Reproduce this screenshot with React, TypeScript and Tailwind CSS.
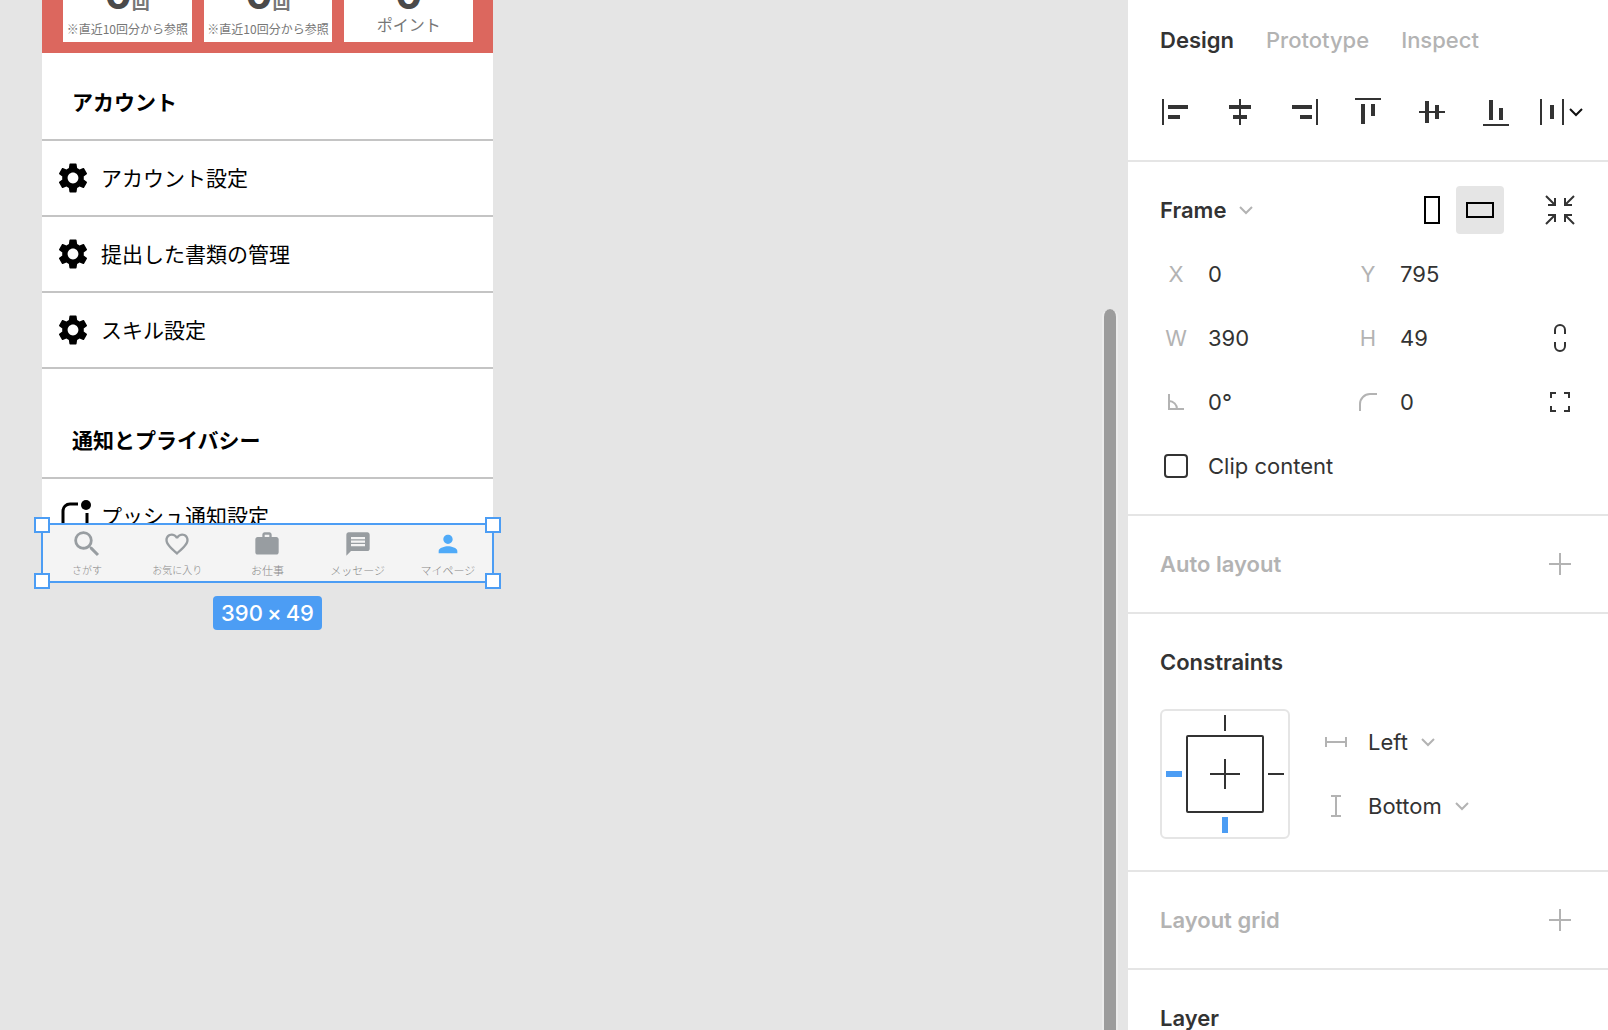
import { ReactNode } from "react";
import { MdFavoriteBorder, MdMessage, MdPerson, MdSearch, MdSettings, MdWork } from "react-icons/md";

// --- Small shared pieces ---
function Chevron() {
  return (
    <svg className="h-4 w-4 shrink-0" viewBox="0 0 16 16" fill="none" stroke="#b3b3b3" strokeWidth="2">
      <path d="M2 5l6 6 6-6" />
    </svg>
  );
}

function Plus() {
  return (
    <svg className="h-16 w-16" viewBox="0 0 64 64" fill="none" stroke="#b3b3b3" strokeWidth="2">
      <path d="M21 32h22M32 21v22" />
    </svg>
  );
}

function Dropdown({ label, options, bold = false }: { label: string; options: string[]; bold?: boolean }) {
  return (
    <label className="flex items-center gap-3">
      <select
        aria-label={label}
        className={`field-sizing-content appearance-none bg-transparent outline-none ${bold ? "font-semibold" : ""}`}
      >
        {options.map((o) => (
          <option key={o}>{o}</option>
        ))}
      </select>
      <Chevron />
    </label>
  );
}

// --- Canvas: mobile screen with the tab bar selected ---
const stats = [
  { unit: "回", note: "※直近10回分から参照" },
  { unit: "回", note: "※直近10回分から参照" },
  { unit: "", note: "ポイント" },
];

function StatCard({ unit, note }: { unit: string; note: string }) {
  return (
    <div className="flex h-[42px] flex-1 flex-col items-center justify-end overflow-hidden bg-white">
      <p className="shrink-0 font-['Inter',sans-serif] text-[40px] leading-10 font-bold text-[#4a4a4a]">
        0
        {unit && (
          <span className="font-['Noto_Sans_CJK_JP',sans-serif] text-lg leading-none text-[#777]">{unit}</span>
        )}
      </p>
      <p
        className={`h-[27px] shrink-0 whitespace-nowrap text-[#777] ${
          unit ? "text-xs leading-[27px]" : "text-base leading-[18px]"
        }`}
      >
        {note}
      </p>
    </div>
  );
}

function MenuHeading({ className, children }: { className: string; children: ReactNode }) {
  return (
    <h2
      className={`flex items-end border-b-2 border-[#c4c4c4] pb-6 pl-[30px] text-[21px] leading-7 font-bold ${className}`}
    >
      {children}
    </h2>
  );
}

function MenuRow({ icon, children }: { icon: ReactNode; children: ReactNode }) {
  return (
    <li className="flex h-[76px] items-center gap-[10px] border-b-2 border-[#c4c4c4] pl-[13px] text-[21px]">
      {icon}
      {children}
    </li>
  );
}

function PushIcon() {
  return (
    <svg className="h-9 w-9" viewBox="0 0 36 36" fill="none" stroke="#000" strokeWidth="3">
      <path d="M23 6h-8a7 7 0 0 0-7 7v13a6 6 0 0 0 6 6h12a6 6 0 0 0 6-6V15" />
      <circle cx="31" cy="7" r="5" fill="#000" stroke="none" />
    </svg>
  );
}

const tabs = [
  { label: "さがす", icon: <MdSearch size={34} />, text: "text-[10px]" },
  { label: "お気に入り", icon: <MdFavoriteBorder size={28} />, text: "text-[10px]" },
  { label: "お仕事", icon: <MdWork size={28} />, text: "text-[11px]" },
  { label: "メッセージ", icon: <MdMessage size={28} />, text: "text-[11px]" },
  { label: "マイページ", icon: <MdPerson size={28} className="text-[#4faaf8]" />, text: "text-[11px]" },
];

function Selection() {
  const handle = "absolute h-4 w-4 border-2 border-[#4c9df4] bg-white";
  return (
    <div className="pointer-events-none absolute -inset-x-px bottom-0 h-[60px] border-2 border-[#4c9df4]">
      <span className={`${handle} -top-2 -left-[9px]`} />
      <span className={`${handle} -top-2 -right-[9px]`} />
      <span className={`${handle} -bottom-2 -left-[9px]`} />
      <span className={`${handle} -right-[9px] -bottom-2`} />
    </div>
  );
}

function PhoneFrame() {
  const gear = <MdSettings size={36} />;
  return (
    <div className="flex w-[451px] flex-col items-center font-['Noto_Sans_CJK_JP',sans-serif] text-black">
      <div className="relative w-full bg-white pb-7">
        <div className="flex gap-3 bg-[#dc675e] pr-5 pb-[11px] pl-[21px]">
          {stats.map((s, i) => (
            <StatCard key={i} {...s} />
          ))}
        </div>

        <MenuHeading className="h-[88px]">アカウント</MenuHeading>
        <ul>
          <MenuRow icon={gear}>アカウント設定</MenuRow>
          <MenuRow icon={gear}>提出した書類の管理</MenuRow>
          <MenuRow icon={gear}>スキル設定</MenuRow>
        </ul>

        <MenuHeading className="h-[110px]">通知とプライバシー</MenuHeading>
        <ul>
          <MenuRow icon={<PushIcon />}>プッシュ通知設定</MenuRow>
        </ul>

        {/* Fixed tab bar over the scrolling list */}
        <nav className="absolute inset-x-0 bottom-0 grid h-[59px] grid-cols-5 bg-[#f4f4f4] pt-[3px]">
          {tabs.map((t) => (
            <button key={t.label} className="flex flex-col items-center text-[#989da1]">
              <span className="flex h-[34px] items-center">{t.icon}</span>
              <span className={`leading-[18px] font-light text-[#888] ${t.text}`}>{t.label}</span>
            </button>
          ))}
        </nav>
        <Selection />
      </div>

      <div className="mt-[13px] flex gap-1 rounded bg-[#4c9df4] px-2 font-['Inter',sans-serif] text-[22px] leading-[34px] font-medium text-white">
        <span>390</span>
        <span>×</span>
        <span>49</span>
      </div>
    </div>
  );
}

// --- Design panel ---
const alignIcons = [
  { name: "Align left", d: "M18 19h2v26h-2zM24 25h20v4H24zM24 35h12v4H24z" },
  { name: "Align horizontal centers", d: "M31 19h2v26h-2zM21 25h22v4H21zM25 35h14v4H25z" },
  { name: "Align right", d: "M44 19h2v26h-2zM20 25h20v4H20zM28 35h12v4H28z" },
  { name: "Align top", d: "M19 18h26v2H19zM25 24h4v20h-4zM35 24h4v12h-4z" },
  { name: "Align vertical centers", d: "M19 31h26v2H19zM25 21h4v22h-4zM35 25h4v14h-4z" },
  { name: "Align bottom", d: "M19 44h26v2H19zM25 20h4v20h-4zM35 28h4v12h-4z" },
];

function Section({ children }: { children: ReactNode }) {
  return <section className="border-b-2 border-[#e5e5e5] py-4">{children}</section>;
}

function EmptySection({ title }: { title: string }) {
  return (
    <Section>
      <div className="flex h-16 items-center justify-between pr-4 pl-8 text-[#b3b3b3]">
        <h3 className="font-semibold">{title}</h3>
        <button aria-label={`Add ${title}`}>
          <Plus />
        </button>
      </div>
    </Section>
  );
}

function Field({ name, icon, value }: { name: string; icon?: ReactNode; value: string }) {
  return (
    <label className="flex h-16 w-48 items-center">
      <span className="flex w-16 shrink-0 justify-center text-[#b3b3b3]">{icon ?? name}</span>
      <input aria-label={name} defaultValue={value} className="w-32 bg-transparent outline-none" />
    </label>
  );
}

function IconButton({ name, d }: { name: string; d: string }) {
  return (
    <button aria-label={name} className="ml-auto">
      <svg className="h-16 w-16" viewBox="0 0 64 64" fill="none" stroke="#333" strokeWidth="2">
        <path d={d} />
      </svg>
    </button>
  );
}

function GrayIcon({ d }: { d: string }) {
  return (
    <svg className="h-16 w-16 shrink-0" viewBox="0 0 64 64" fill="none" stroke="#b3b3b3" strokeWidth="2">
      <path d={d} />
    </svg>
  );
}

function FrameSection() {
  return (
    <Section>
      <div className="flex h-16 items-center pr-4 pl-8">
        <Dropdown label="Frame type" options={["Frame", "Group"]} bold />
        <button aria-label="Portrait" className="ml-auto flex h-12 w-12 items-center justify-center rounded">
          <span className="h-7 w-4 border-2 border-black" />
        </button>
        <button aria-label="Landscape" className="mr-6 flex h-12 w-12 items-center justify-center rounded bg-[#e5e5e5]">
          <span className="h-4 w-7 border-2 border-black" />
        </button>
        <button aria-label="Resize to fit">
          <svg className="h-16 w-16" viewBox="0 0 64 64" fill="none" stroke="#333" strokeWidth="2">
            <path d="M18 18l9 9M27 20v7h-7M46 18l-9 9M37 20v7h7M18 46l9-9M27 44v-7h-7M46 46l-9-9M37 44v-7h7" />
          </svg>
        </button>
      </div>
      <div className="flex px-4">
        <Field name="X" value="0" />
        <Field name="Y" value="795" />
      </div>
      <div className="flex px-4">
        <Field name="W" value="390" />
        <Field name="H" value="49" />
        <IconButton
          name="Constrain proportions"
          d="M27 28v-4a5 5 0 0 1 10 0v4M27 36v4a5 5 0 0 0 10 0v-4"
        />
      </div>
      <div className="flex px-4">
        <Field name="Rotation" icon={<GrayIcon d="M25 24v15h15M25 31a8 8 0 0 1 8 8" />} value="0°" />
        <Field name="Corner radius" icon={<GrayIcon d="M24 41v-7a10 10 0 0 1 10-10h7" />} value="0" />
        <IconButton name="Independent corners" d="M23 28v-5h5M36 23h5v5M41 36v5h-5M28 41h-5v-5" />
      </div>
      <label className="flex h-16 items-center gap-5 px-9">
        <input type="checkbox" className="h-6 w-6 appearance-none rounded border-2 border-[#333]" />
        Clip content
      </label>
    </Section>
  );
}

function ConstraintsSection() {
  return (
    <Section>
      <h3 className="flex h-16 items-center pl-8 font-semibold">Constraints</h3>
      <div className="flex h-40 items-center gap-[14px] pl-8">
        <svg className="h-[130px] w-[130px] shrink-0" viewBox="0 0 130 130" fill="none" strokeWidth="2">
          <rect x="1" y="1" width="128" height="128" rx="5" stroke="#e5e5e5" />
          <rect x="27" y="27" width="76" height="76" rx="1" stroke="#333" />
          <path d="M65 6v16M108 65h16M50 65h30M65 50v30" stroke="#333" />
          <path d="M6 65h16M65 108v16" stroke="#4c9df4" strokeWidth="6" />
        </svg>
        <div>
          <div className="flex h-16 items-center">
            <GrayIcon d="M22 32h20M22 27v10M42 27v10" />
            <Dropdown label="Horizontal constraint" options={["Left", "Right", "Center", "Scale"]} />
          </div>
          <div className="flex h-16 items-center">
            <GrayIcon d="M32 22v20M27 22h10M27 42h10" />
            <Dropdown label="Vertical constraint" options={["Bottom", "Top", "Center", "Scale"]} />
          </div>
        </div>
      </div>
    </Section>
  );
}

function DesignPanel() {
  return (
    <aside className="w-[480px] shrink-0 overflow-hidden bg-white text-[22px] leading-8 text-[#333]">
      <div className="flex h-20 items-center px-4 font-medium text-[#b3b3b3]">
        <button className="px-4 font-semibold text-[#333]">Design</button>
        <button className="px-4">Prototype</button>
        <button className="px-4">Inspect</button>
      </div>
      <div className="flex border-b-2 border-[#e5e5e5] pb-4 pl-4">
        {alignIcons.map((icon) => (
          <button key={icon.name} aria-label={icon.name}>
            <svg className="h-16 w-16" viewBox="0 0 64 64" fill="#333">
              <path d={icon.d} />
            </svg>
          </button>
        ))}
        <button aria-label="Distribute">
          <svg className="h-16 w-20" viewBox="0 0 80 64" fill="#333">
            <path d="M12 19h2v26h-2zM34 19h2v26h-2zM22 25h4v14h-4z" />
            <path d="M42 29l6 6 6-6" fill="none" stroke="#111" strokeWidth="2" />
          </svg>
        </button>
      </div>
      <FrameSection />
      <EmptySection title="Auto layout" />
      <ConstraintsSection />
      <EmptySection title="Layout grid" />
      <Section>
        <h3 className="flex h-16 items-center pl-8 font-semibold">Layer</h3>
      </Section>
    </aside>
  );
}

export default function App() {
  return (
    <div className="flex h-screen overflow-hidden bg-[#e5e5e5] font-['Inter',sans-serif]">
      <main className="flex flex-1 justify-between pr-[10px] pl-[42px]">
        <PhoneFrame />
        {/* Canvas scrollbar, runs past the bottom edge */}
        <div className="flex w-4 flex-col justify-end">
          <div className="h-[70%] rounded-t-full border-x-2 border-[#ececec] bg-[#9c9c9c]" />
        </div>
      </main>
      <DesignPanel />
    </div>
  );
}
